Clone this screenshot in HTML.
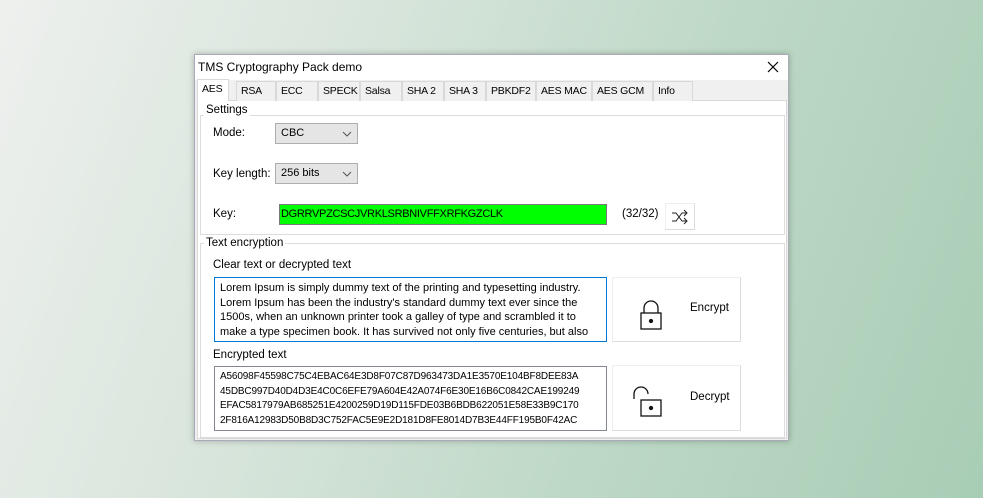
<!DOCTYPE html>
<html><head><style>
*{box-sizing:border-box;margin:0;padding:0}
body{width:983px;height:498px;overflow:hidden;position:relative;font-family:"Liberation Sans",sans-serif;font-size:11.5px;color:#000;
background:linear-gradient(110deg,#eef0ee 0%,#d6e4da 35%,#bdd8c6 65%,#a8cdb5 100%)}
.a{position:absolute}
.win{left:194px;top:54px;width:595px;height:387px;background:#f0f0f0;border:1px solid #aab;box-shadow:0 0 6px rgba(0,0,0,.25)}
.title{left:0;top:0;width:593px;height:25px;background:#fff;}
.panel{left:2px;top:45px;width:590px;height:339px;background:#fff;border:1px solid #d9d9d9}
.tab{top:26px;height:20px;border:1px solid #d9d9d9;border-bottom:none;background:#f0f0f0;padding:3px 0 0 4px;font-size:10.5px;letter-spacing:-0.2px;white-space:nowrap;overflow:hidden}
.grp{border:1px solid #dcdcdc}
.lbl{background:#fff;padding:0 2px}
.combo{height:21px;border:1px solid #adadad;background:#e5e5e5;padding:3px 5px;font-size:11px}
.combo svg{position:absolute;right:5px;top:7px}
.memo{border:1px solid #828790;background:#fff;font-size:11px;line-height:14.5px;padding:3px 5px;white-space:nowrap;overflow:hidden}
.btn{background:#fff;border:1px solid #dcdcdc;border-top-color:#eee;border-left-color:#eee}
</style></head><body>
<div class="a win">
 <div class="a title"><span class="a" style="left:3px;top:5px;font-size:12px">TMS Cryptography Pack demo</span>
  <svg class="a" style="left:572px;top:6px" width="12" height="12"><path d="M1 1L11 11M11 1L1 11" stroke="#000" stroke-width="1.2"/></svg></div>
 <div class="a panel"></div>
 <div class="a tab" style="left:2px;top:24px;height:22px;width:32px;background:#fff;border-bottom:none">AES</div>
 <div class="a tab" style="left:41px;width:40px">RSA</div>
 <div class="a tab" style="left:81px;width:42px">ECC</div>
 <div class="a tab" style="left:123px;width:42px">SPECK</div>
 <div class="a tab" style="left:165px;width:42px">Salsa</div>
 <div class="a tab" style="left:207px;width:42px">SHA 2</div>
 <div class="a tab" style="left:249px;width:42px">SHA 3</div>
 <div class="a tab" style="left:291px;width:50px">PBKDF2</div>
 <div class="a tab" style="left:341px;width:56px">AES MAC</div>
 <div class="a tab" style="left:397px;width:61px">AES GCM</div>
 <div class="a tab" style="left:458px;width:40px">Info</div>
</div>
<div class="a grp" style="left:200px;top:115px;width:585px;height:120px"></div>
<span class="a lbl" style="left:204px;top:104px">Settings</span>
<span class="a" style="left:213px;top:127px">Mode:</span>
<div class="a combo" style="left:275px;top:123px;width:83px">CBC<svg width="10" height="6"><path d="M1 1L5 5L9 1" stroke="#555" fill="none"/></svg></div>
<span class="a" style="left:213px;top:168px">Key length:</span>
<div class="a combo" style="left:275px;top:163px;width:83px">256 bits<svg width="10" height="6"><path d="M1 1L5 5L9 1" stroke="#555" fill="none"/></svg></div>
<span class="a" style="left:213px;top:208px">Key:</span>
<div class="a" style="left:279px;top:204px;width:328px;height:21px;background:#00ff00;border:1px solid #7a7a7a;font-size:11px;padding:3px 1px;letter-spacing:-0.3px">DGRRVPZCSCJVRKLSRBNIVFFXRFKGZCLK</div>
<span class="a" style="left:622px;top:208px">(32/32)</span>
<div class="a btn" style="left:665px;top:203px;width:30px;height:27px"><svg class="a" style="left:5px;top:5px" width="18" height="16" fill="none" stroke="#222" stroke-width="1"><path d="M1 4H5L11 12H16M1 12H5L11 4H16M13 1L16 4L13 7M13 9L16 12L13 15"/></svg></div>
<div class="a grp" style="left:200px;top:243px;width:585px;height:195px"></div>
<span class="a lbl" style="left:204px;top:237px">Text encryption</span>
<span class="a" style="left:213px;top:259px">Clear text or decrypted text</span>
<div class="a memo" style="left:214px;top:277px;width:393px;height:65px;border-color:#0078d7">Lorem Ipsum is simply dummy text of the printing and typesetting industry.<br>Lorem Ipsum has been the industry's standard dummy text ever since the<br>1500s, when an unknown printer took a galley of type and scrambled it to<br>make a type specimen book. It has survived not only five centuries, but also</div>
<div class="a btn" style="left:612px;top:277px;width:129px;height:65px">
<svg class="a" style="left:26px;top:22px" width="24" height="30" fill="none" stroke="#111" stroke-width="1.3"><path d="M5 13V8A7 7 0 0 1 19 8V13"/><rect x="2" y="13" width="20" height="16"/><circle cx="12" cy="21" r="1.5" fill="#111"/></svg>
<span class="a" style="left:77px;top:24px">Encrypt</span></div>
<span class="a" style="left:213px;top:349px">Encrypted text</span>
<div class="a memo" style="left:214px;top:366px;width:393px;height:65px;font-size:10px;letter-spacing:-0.15px">A56098F45598C75C4EBAC64E3D8F07C87D963473DA1E3570E104BF8DEE83A<br>45DBC997D40D4D3E4C0C6EFE79A604E42A074F6E30E16B6C0842CAE199249<br>EFAC5817979AB685251E4200259D19D115FDE03B6BDB622051E58E33B9C170<br>2F816A12983D50B8D3C752FAC5E9E2D181D8FE8014D7B3E44FF195B0F42AC</div>
<div class="a btn" style="left:612px;top:365px;width:129px;height:66px">
<svg class="a" style="left:18px;top:20px" width="34" height="32" fill="none" stroke="#111" stroke-width="1.3"><path d="M3 13V8A7 7 0 0 1 17 8"/><rect x="10" y="14" width="20" height="16"/><circle cx="20" cy="22" r="1.5" fill="#111"/></svg>
<span class="a" style="left:77px;top:25px">Decrypt</span></div>
</body></html>
